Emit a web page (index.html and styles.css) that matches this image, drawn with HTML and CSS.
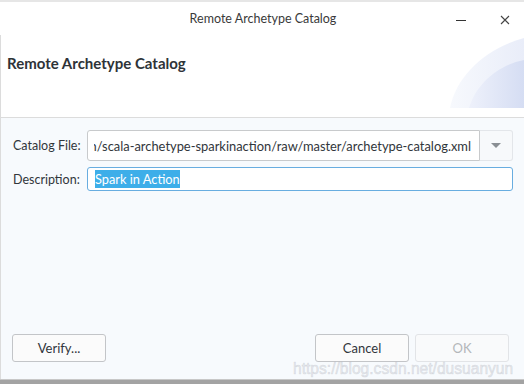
FILE: index.html
```html
<!DOCTYPE html>
<html>
<head>
<meta charset="utf-8">
<link rel="stylesheet" href="styles.css">
</head>
<body>
<div class="window">
  <div class="titlebar">
    <span class="title">Remote Archetype Catalog</span>
    <div class="controls">
      <svg class="ctl" width="10" height="10" viewBox="0 0 10 10"><path d="M0 5.5h10" stroke="#333" stroke-width="1"/></svg>
      <svg class="ctl" width="10" height="10" viewBox="0 0 10 10"><path d="M1 1l8 8M9 1l-8 8" stroke="#444" stroke-width="1.1"/></svg>
    </div>
  </div>
  <div class="header">
    <h1 class="heading">Remote Archetype Catalog</h1>
    <svg class="deco" width="74" height="70" viewBox="0 0 74 70">
      <defs>
        <linearGradient id="g1" x1="0" y1="0" x2="1" y2="0">
          <stop offset="0" stop-color="#f7f9fd"/>
          <stop offset="1" stop-color="#e9edf9"/>
        </linearGradient>
        <linearGradient id="g2" x1="0" y1="0" x2="1" y2="0">
          <stop offset="0" stop-color="#eef1fb"/>
          <stop offset="1" stop-color="#d5ddf3"/>
        </linearGradient>
      </defs>
      <path d="M0 70 C6 38 36 10 74 0 L74 70 Z" fill="url(#g1)"/>
      <path d="M19 70 C26 46 48 27 74 22 L74 70 Z" fill="url(#g2)"/>
    </svg>
  </div>
  <div class="body">
    <div class="form">
      <label class="label">Catalog File:</label>
      <div class="combo">
        <div class="combo-field">
          <div class="combo-clip"><span class="combo-text">n/scala-archetype-sparkinaction/raw/master/archetype-catalog.xml</span></div>
        </div>
        <div class="combo-btn"><svg width="10" height="6" viewBox="0 0 10 6"><path d="M0 0h10L5 5z" fill="#8a8f94"/></svg></div>
      </div>
      <label class="label">Description:</label>
      <div class="input"><span class="sel">Spark in Action</span></div>
    </div>
    <div class="buttons">
      <button class="btn">Verify...</button>
      <div class="spacer"></div>
      <button class="btn">Cancel</button>
      <button class="btn disabled">OK</button>
    </div>
    <div class="watermark">https://blog.csdn.net/dusuanyun</div>
  </div>
  <div class="bottom"></div>
</div>
</body>
</html>
```
FILE: styles.css
```css
html, body {
  margin: 0;
  padding: 0;
}
body {
  width: 524px;
  height: 384px;
  overflow: hidden;
  background: #ffffff;
  font-family: "Lato", "Noto Sans", sans-serif;
  color: #31363b;
}
.window {
  display: flex;
  flex-direction: column;
  height: 384px;
  border-top: 2px solid #e6e6e6;
  box-sizing: border-box;
}
.titlebar {
  height: 33px;
  display: flex;
  align-items: center;
  justify-content: center;
  position: relative;
  background: #ffffff;
}
.title {
  font-size: 12.5px;
  color: #3a3a3a;
  margin-left: 2px;
}
.controls {
  position: absolute;
  right: 14px;
  top: 13px;
  display: flex;
  gap: 34px;
}
.ctl {
  display: block;
}
.header {
  height: 82px;
  display: flex;
  justify-content: space-between;
  align-items: flex-start;
  background: #ffffff;
  border-left: 1px solid #dcdcdc;
  border-bottom: 1px solid #dcdcdc;
}
.heading {
  margin: 19px 0 0 6px;
  font-size: 15px;
  font-weight: 700;
  color: #2e3338;
}
.deco {
  display: block;
  margin-top: 3px;
}
.body {
  flex: 1;
  position: relative;
  display: flex;
  flex-direction: column;
  background: #f7fafd;
  border-left: 1px solid #dcdcdc;
}
.form {
  display: grid;
  grid-template-columns: 74px 426px;
  grid-template-rows: 31px 24px;
  row-gap: 6px;
  align-items: center;
  padding: 12px 0 0 12px;
}
.label {
  font-size: 12.5px;
  color: #31363b;
}
.combo {
  display: flex;
  height: 31px;
}
.combo-field {
  width: 393px;
  height: 31px;
  box-sizing: border-box;
  border: 1px solid #c8cacc;
  border-radius: 3px 0 0 3px;
  background: #ffffff;
  display: flex;
  align-items: center;
  padding: 0 8px 0 6px;
}
.combo-clip {
  flex: 1;
  display: flex;
  justify-content: flex-end;
  overflow: hidden;
  white-space: nowrap;
}
.combo-text {
  font-size: 12.9px;
  color: #31363b;
  flex-shrink: 0;
}
.combo-btn {
  flex: 1;
  height: 31px;
  box-sizing: border-box;
  border: 1px solid #e3e6ea;
  border-left: none;
  border-radius: 0 3px 3px 0;
  background: #f7f9fb;
  display: flex;
  align-items: center;
  justify-content: center;
}
.input {
  height: 24px;
  box-sizing: border-box;
  border: 1px solid #68ade0;
  border-radius: 3px;
  background: #ffffff;
  display: flex;
  align-items: center;
  padding-left: 7px;
}
.sel {
  font-size: 12.8px;
  background: #3daee9;
  color: #ffffff;
  line-height: 18px;
}
.buttons {
  margin-top: auto;
  display: flex;
  align-items: center;
  padding: 0 15px 17px 11px;
  gap: 6px;
}
.spacer {
  flex: 1;
}
.btn {
  width: 94px;
  height: 28px;
  box-sizing: border-box;
  border: 1px solid #c3c5c8;
  border-radius: 3px;
  background: #fbfbfb;
  font-family: "Lato", "Noto Sans", sans-serif;
  font-size: 13px;
  color: #31363b;
  padding: 0;
}
.btn.disabled {
  border-color: #e2e4e7;
  color: #b4b7ba;
  background: #f9fafb;
}
.watermark {
  position: absolute;
  left: 292px;
  bottom: 1px;
  font-family: "Liberation Sans", Arial, sans-serif;
  font-size: 15.6px;
  color: rgba(230, 232, 236, 0.85);
  -webkit-text-stroke: 0.6px rgba(170, 175, 185, 0.35);
  pointer-events: none;
}
.bottom {
  height: 4px;
  background: #a3a3a3;
  border-top: 1px solid #c8c8c8;
}
```
